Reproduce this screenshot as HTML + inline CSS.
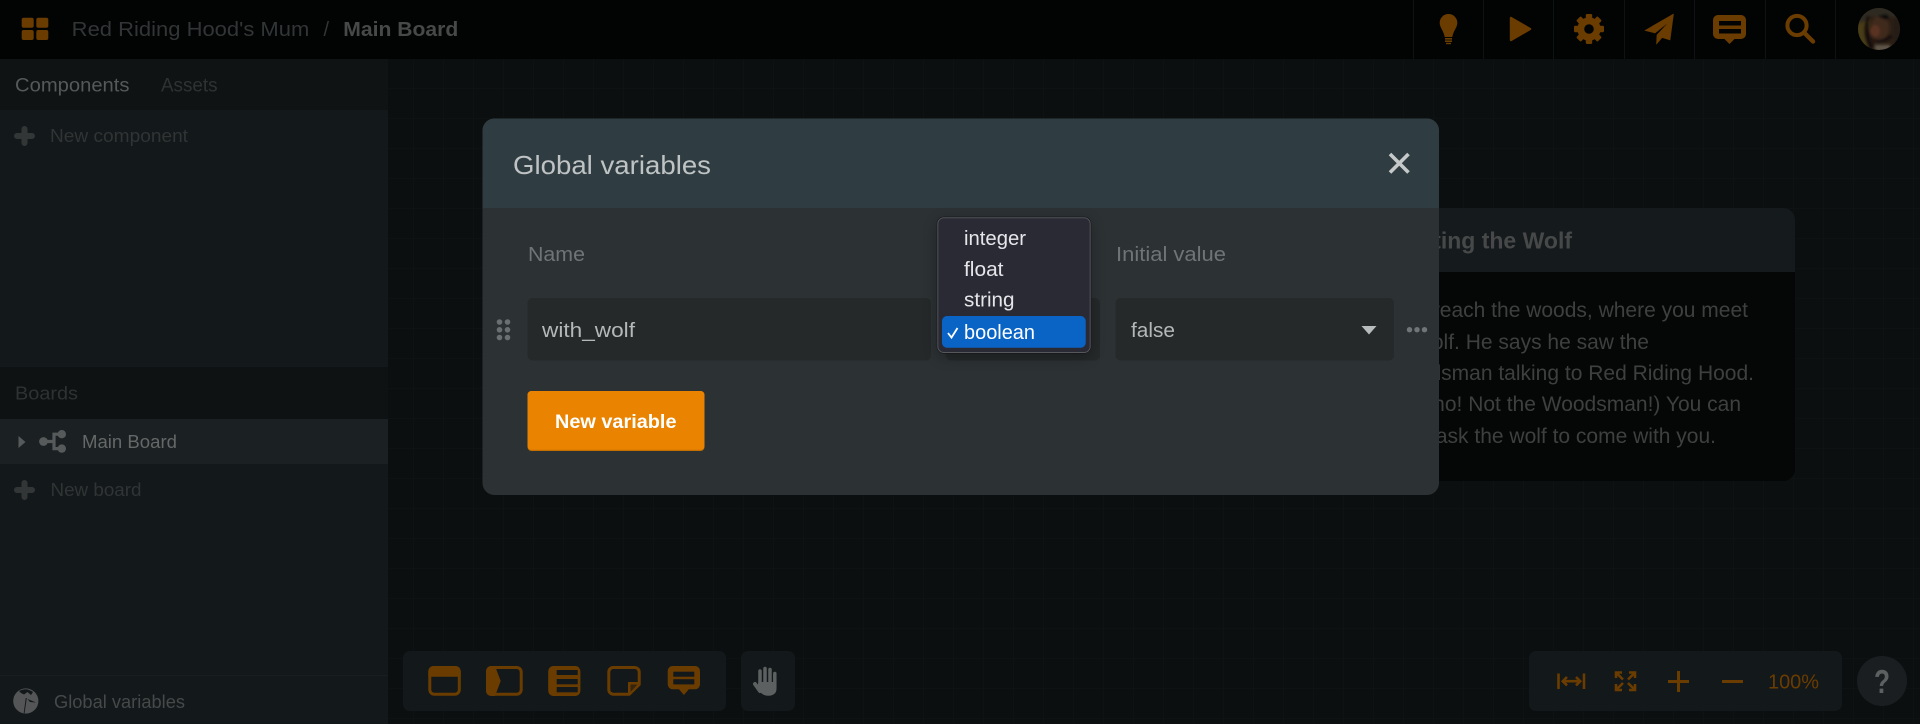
<!DOCTYPE html>
<html lang="en"><head><meta charset="utf-8"><title>Global variables</title>
<style>
html,body{margin:0;padding:0;background:#0c0f0f;width:1920px;height:724px;overflow:hidden}
svg{display:block}
text{font-family:"Liberation Sans",sans-serif;white-space:pre}
</style></head><body>
<svg width="1920" height="724" viewBox="0 0 1920 724" xmlns="http://www.w3.org/2000/svg">
<defs>
<pattern id="grid" x="23" y="28" width="30" height="30" patternUnits="userSpaceOnUse"><rect width="30" height="30" fill="#0c0f0f"/><path d="M.5 0V30M0 .5H30" stroke="#0f1212" stroke-width="1"/></pattern>
<filter id="sh" x="-30%" y="-30%" width="160%" height="160%"><feGaussianBlur stdDeviation="7"/></filter>
<filter id="b1" x="-50%" y="-50%" width="200%" height="200%"><feGaussianBlur stdDeviation="1.300"/></filter>
<clipPath id="av"><circle cx="1879" cy="29" r="21"/></clipPath>
<clipPath id="mh"><path d="M494.500 118.500H1427a12 12 0 0 1 12 12V208H482.500V130.500a12 12 0 0 1 12-12z"/></clipPath>
</defs>
<rect width="1920" height="724" fill="url(#grid)"/>
<!-- top bar -->
<rect width="1920" height="59" fill="#020404"/>
<g fill="#6b3c00">
<rect x="21.700" y="17.700" width="12" height="10" rx="2"/><rect x="36.300" y="17.700" width="12" height="10" rx="2"/><rect x="21.700" y="30" width="12" height="10" rx="2"/><rect x="36.300" y="30" width="12" height="10" rx="2"/>
</g>
<text x="71.700" y="36" font-size="20" style="fill:#323536" textLength="237.600" lengthAdjust="spacingAndGlyphs">Red Riding Hood's Mum</text>
<text x="323.500" y="36" font-size="20" style="fill:#323536">/</text>
<text x="343.300" y="36" font-size="20" style="fill:#474949" textLength="115" lengthAdjust="spacingAndGlyphs" font-weight="bold">Main Board</text>
<g stroke="#0f1212" stroke-width="1"><path d="M1413.500 0V59M1483.500 0V59M1553.500 0V59M1624.500 0V59M1694.500 0V59M1765.500 0V59M1835.500 0V59"/></g>
<g fill="#6b3c00">
<path d="M1448.500 14a8.800 8.800 0 0 1 8.800 8.800c0 5-4 8-5 14.200h-7.600c-1-6.200-5-9.200-5-14.200a8.800 8.800 0 0 1 8.800-8.800z"/>
<rect x="1445" y="38" width="7" height="1.600"/><rect x="1445" y="40.400" width="7" height="1.600"/><rect x="1446" y="42.800" width="5" height="1.400"/>
<path d="M1511 18L1530 29L1511 40Z" stroke="#6b3c00" stroke-width="2.400" stroke-linejoin="round"/>
<g transform="translate(1589,29)"><circle r="8.200" fill="none" stroke="#6b3c00" stroke-width="6.800"/>
<g id="t"><rect x="-3.200" y="-15" width="6.400" height="5" rx="1.200"/></g><use href="#t" transform="rotate(45)"/><use href="#t" transform="rotate(90)"/><use href="#t" transform="rotate(135)"/><use href="#t" transform="rotate(180)"/><use href="#t" transform="rotate(225)"/><use href="#t" transform="rotate(270)"/><use href="#t" transform="rotate(315)"/></g>
<path d="M1673.500 14L1645 30.500L1655 33L1670.500 20.500L1657 35L1656.500 44L1662 37.500L1670 40Z" stroke="#6b3c00" stroke-width=".6" stroke-linejoin="round"/>
<path d="M1718 15h23a5 5 0 0 1 5 5v14a5 5 0 0 1-5 5h-6.500l-5 5-5-5H1718a5 5 0 0 1-5-5V20a5 5 0 0 1 5-5z"/>
</g>
<rect x="1719" y="21" width="22" height="4.500" fill="#020404"/><rect x="1719" y="29" width="22" height="4.500" fill="#020404"/>
<circle cx="1797" cy="25.500" r="9.600" fill="none" stroke="#6b3c00" stroke-width="4"/>
<path d="M1805 33.500L1813 41.500" stroke="#6b3c00" stroke-width="4.400" stroke-linecap="round"/>
<g clip-path="url(#av)">
<rect x="1858" y="8" width="42" height="42" fill="#2e2116"/>
<g filter="url(#b1)">
<path d="M1856 20h14l-2 30h-12z" fill="#4a3c14"/>
<path d="M1858 6h42v10l-14 2-14-2-12 8z" fill="#2d2922"/>
<path d="M1870 16q-4 14 4 30l-4 4q-10-16-3-34z" fill="#15100c"/>
<ellipse cx="1880" cy="28" rx="9" ry="12" fill="#40291c"/>
<ellipse cx="1875" cy="31" rx="5" ry="6" fill="#5a3122"/>
<path d="M1877 16l9-2 4 3-4 3z" fill="#100c09"/>
<path d="M1873 39q8 3 18-5l1 4q-8 6-17 4z" fill="#150e09"/>
<path d="M1875 45h15v6h-15z" fill="#5f564a"/>
<path d="M1892 18h10v30h-10z" fill="#261a12"/>
</g></g>
<!-- sidebar -->
<rect x="0" y="59" width="388" height="51" fill="#101313"/>
<rect x="0" y="110" width="388" height="257" fill="#13181a"/>
<rect x="0" y="367" width="388" height="52" fill="#0f1212"/>
<rect x="0" y="419" width="388" height="45" fill="#1b2022"/>
<rect x="0" y="464" width="388" height="260" fill="#13181a"/>
<text x="15" y="91.500" font-size="19" style="fill:#565959" textLength="114.500" lengthAdjust="spacingAndGlyphs">Components</text>
<text x="161" y="91.500" font-size="19" style="fill:#2f3233" textLength="56.500" lengthAdjust="spacingAndGlyphs">Assets</text>
<path d="M24.500 129v14M17 136h15" stroke="#333637" stroke-width="6" stroke-linecap="round"/>
<text x="50" y="142" font-size="18" style="fill:#303435" textLength="138" lengthAdjust="spacingAndGlyphs">New component</text>
<text x="15" y="399.500" font-size="18" style="fill:#2f3232" textLength="63" lengthAdjust="spacingAndGlyphs">Boards</text>
<path d="M18.500 436L25.500 442L18.500 448Z" fill="#575a5a"/>
<g fill="#575a5a"><circle cx="43.500" cy="441.500" r="4.400"/><circle cx="61.800" cy="434.200" r="4.200"/><circle cx="61.800" cy="448.600" r="4.200"/></g>
<path d="M44 441.500H54M61 434.200H54V448.600H61" stroke="#575a5a" stroke-width="3.200" fill="none"/>
<text x="82" y="448" font-size="18" style="fill:#656868" textLength="95" lengthAdjust="spacingAndGlyphs">Main Board</text>
<path d="M24.500 483v14M17 490h15" stroke="#333637" stroke-width="6" stroke-linecap="round"/>
<text x="50.500" y="496" font-size="18" style="fill:#303435" textLength="91" lengthAdjust="spacingAndGlyphs">New board</text>
<path d="M0 675.500H388" stroke="#191e20"/>
<circle cx="25.800" cy="701" r="12.600" fill="#535556"/>
<path d="M19 691Q26 687 33 692L31 695L27.500 692L24 694.500L21 693ZM27.500 699L36 702.500L30 702ZM26.800 698L24.500 713.500L23.700 713L25.800 698Z" fill="#13181a"/>
<text x="54" y="708" font-size="18" style="fill:#464949" textLength="131" lengthAdjust="spacingAndGlyphs">Global variables</text>
<!-- card -->
<path d="M1100 220a12 12 0 0 1 12-12h671a12 12 0 0 1 12 12v52H1100z" fill="#151a1d"/>
<path d="M1100 272h695v197a12 12 0 0 1-12 12H1112a12 12 0 0 1-12-12z" fill="#050606"/>
<g font-size="21" text-anchor="end" style="fill:#3e4040">
<text x="1572" y="248.500" font-size="23" font-weight="bold" style="fill:#474949">Meeting the Wolf</text>
<text x="1748" y="317">You reach the woods, where you meet</text>
<text x="1649" y="349">the wolf. He says he saw the</text>
<text x="1754" y="380">Woodsman talking to Red Riding Hood.</text>
<text x="1741" y="411">(Oh no! Not the Woodsman!) You can</text>
<text x="1716" y="443">now ask the wolf to come with you.</text>
</g>
<!-- bottom toolbars -->
<rect x="403" y="651" width="323" height="60" rx="7" fill="#13181a"/>
<rect x="741" y="651" width="54" height="60" rx="7" fill="#13181a"/>
<g fill="none" stroke="#6b3c00" stroke-width="3">
<rect x="429.800" y="667.500" width="29.500" height="26.700" rx="4.500"/>
<rect x="487.500" y="667.500" width="33.700" height="26.700" rx="4.500"/>
<rect x="549.800" y="667.500" width="29" height="26.700" rx="4.500"/>
<path d="M613 667.500h21.500a4.500 4.500 0 0 1 4.700 4.500v12.500l-10 9.700h-16.200a4.500 4.500 0 0 1-4.200-4.500v-17.700a4.500 4.500 0 0 1 4.200-4.500z"/>
</g>
<g fill="#6b3c00">
<path d="M433 666h23a5 5 0 0 1 4.700 5v5.700h-32.400v-5.700a5 5 0 0 1 4.700-5z"/>
<path d="M491 666h4l5.700 15-5.700 15h-4a5 5 0 0 1-5-5v-20a5 5 0 0 1 5-5z"/>
<path d="M553 666h22.500a5 5 0 0 1 4.800 5v20a5 5 0 0 1-4.800 5H553a5 5 0 0 1-4.700-5v-20a5 5 0 0 1 4.700-5z"/>
<path d="M672.500 666h22.700a5 5 0 0 1 4.800 5v13.300a5 5 0 0 1-4.800 5h-6.400l-4.900 5.700-4.900-5.700h-6.500a5 5 0 0 1-4.800-5V671a5 5 0 0 1 4.800-5z"/>
<path d="M628 682h11.500v3l-9 10H628z"/>
</g>
<path d="M630.500 684.500h7L630.500 692z" fill="#36240e"/>
<g fill="#13181a">
<rect x="556.700" y="670" width="21" height="5"/><rect x="556.700" y="679" width="21" height="5.300"/><rect x="556.700" y="687" width="21" height="5.300"/>
<rect x="673.300" y="671.700" width="21" height="5"/><rect x="673.300" y="679.200" width="21" height="5.200"/>
</g>
<g stroke="#5d6060" stroke-linecap="round" fill="none"><path d="M760 671V686M765 668.500V686M770 669.500V686M774.800 673.500V688" stroke-width="3.500"/><path d="M755 684L760 691" stroke-width="4"/></g>
<path d="M758.500 682h18v7c0 4-3 6.700-8 6.700-4 0-6.500-1.500-8.500-4l-3-4z" fill="#5d6060"/>
<rect x="1529" y="651" width="313" height="60" rx="7" fill="#13181a"/>
<g stroke="#6b3c00" fill="none" stroke-width="2.600">
<path d="M1558.500 673.500V689M1584 673.500V689M1563 681.200H1580M1567 677L1562.800 681.200L1567 685.400M1576 677L1580.200 681.200L1576 685.400"/>
<path d="M1616 678V672.500H1622M1635 678V672.500H1629M1616 684V690H1622M1635 684V690H1629M1617 673.500L1623 679.500M1634 673.500L1628 679.500M1617 689L1623 683M1634 689L1628 683"/>
<path d="M1678.500 671V692M1668 681.500H1689" stroke-width="3"/>
<path d="M1722 681.500H1743" stroke-width="3"/>
</g>
<text x="1768" y="688.500" font-size="20" style="fill:#6b3c00" textLength="51" lengthAdjust="spacingAndGlyphs">100%</text>
<circle cx="1882" cy="681" r="25" fill="#1b1e20"/>
<text x="1874" y="693" font-size="33" font-weight="bold" style="fill:#5d6061" textLength="16" lengthAdjust="spacingAndGlyphs">?</text>
<!-- modal -->
<rect x="482.500" y="118.500" width="956.500" height="376.500" rx="12" fill="#2c3133"/>
<rect x="482.500" y="118.500" width="956.500" height="90" fill="#2f3c41" clip-path="url(#mh)"/>
<text x="513" y="174" font-size="26" style="fill:#bfc3c4" textLength="198" lengthAdjust="spacingAndGlyphs">Global variables</text>
<path d="M1390 154L1408.500 172.500M1408.500 154L1390 172.500" stroke="#c6c9c9" stroke-width="3.600"/>
<text x="528" y="261" font-size="20" style="fill:#6f7576" textLength="57" lengthAdjust="spacingAndGlyphs">Name</text>
<text x="1116" y="261" font-size="20" style="fill:#6f7576" textLength="110" lengthAdjust="spacingAndGlyphs">Initial value</text>
<g fill="#6a7072"><circle cx="499.500" cy="322" r="2.800"/><circle cx="507.500" cy="322" r="2.800"/><circle cx="499.500" cy="329.800" r="2.800"/><circle cx="507.500" cy="329.800" r="2.800"/><circle cx="499.500" cy="337.500" r="2.800"/><circle cx="507.500" cy="337.500" r="2.800"/></g>
<rect x="527.500" y="298" width="403.500" height="62.500" rx="5" fill="#252929"/>
<text x="542" y="337" font-size="20" style="fill:#b4b8b8" textLength="93" lengthAdjust="spacingAndGlyphs">with_wolf</text>
<rect x="946" y="298" width="154" height="62.500" rx="5" fill="#252929"/>
<rect x="1115.500" y="298" width="278.500" height="62.500" rx="5" fill="#252929"/>
<text x="1131" y="337" font-size="20" style="fill:#b4b8b8" textLength="44" lengthAdjust="spacingAndGlyphs">false</text>
<path d="M1361.500 326H1376.500L1369 334.500Z" fill="#b9bcbc"/>
<g fill="#707677"><circle cx="1409.500" cy="329.700" r="2.700"/><circle cx="1417" cy="329.700" r="2.700"/><circle cx="1424.500" cy="329.700" r="2.700"/></g>
<rect x="527.500" y="391" width="177" height="60" rx="4" fill="#c56f00"/>
<rect x="527.500" y="391" width="177" height="58.800" rx="4" fill="#e98300"/>
<text x="555" y="428" font-size="19" font-weight="bold" style="fill:#fff" textLength="121.500" lengthAdjust="spacingAndGlyphs">New variable</text>
<!-- native popup -->
<rect x="937" y="221" width="154" height="136" rx="6" fill="#000" opacity=".28" filter="url(#sh)"/>
<rect x="936.800" y="216.800" width="154.400" height="136.700" rx="7" fill="#101114"/>
<rect x="937.800" y="217.800" width="152.400" height="134.700" rx="6" fill="#2a2a35" stroke="#55575b" stroke-width="1"/>
<rect x="942" y="316" width="143.700" height="31.700" rx="5" fill="#0a64c6"/>
<text x="964" y="245" font-size="20" style="fill:#e6e6ea" textLength="62" lengthAdjust="spacingAndGlyphs">integer</text>
<text x="964" y="276" font-size="20" style="fill:#e6e6ea" textLength="39.500" lengthAdjust="spacingAndGlyphs">float</text>
<text x="964" y="306.500" font-size="20" style="fill:#e6e6ea" textLength="50.500" lengthAdjust="spacingAndGlyphs">string</text>
<text x="964" y="339" font-size="20" style="fill:#fff" textLength="71" lengthAdjust="spacingAndGlyphs">boolean</text>
<path d="M948 333L951.500 337.500L957.500 328" stroke="#fff" stroke-width="1.800" fill="none"/>
</svg>
</body></html>
